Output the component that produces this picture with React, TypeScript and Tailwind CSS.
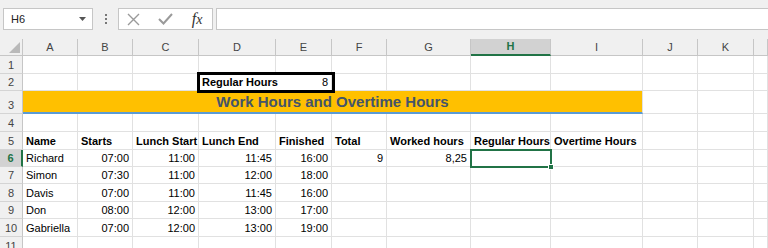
import React from "react";

const cols = ["A", "B", "C", "D", "E", "F", "G", "H", "I", "J", "K", ""];

type C = { t?: string; r?: boolean; b?: boolean };

const rows: { n: number; cells: C[] }[] = [
  { n: 5, cells: [
    { t: "Name", b: true }, { t: "Starts", b: true }, { t: "Lunch Start", b: true }, { t: "Lunch End", b: true },
    { t: "Finished", b: true }, { t: "Total", b: true }, { t: "Worked hours", b: true }, { t: "Regular Hours", b: true },
    { t: "Overtime Hours", b: true }, {}, {}, {},
  ] },
  { n: 6, cells: [
    { t: "Richard" }, { t: "07:00", r: true }, { t: "11:00", r: true }, { t: "11:45", r: true }, { t: "16:00", r: true },
    { t: "9", r: true }, { t: "8,25", r: true }, {}, {}, {}, {}, {},
  ] },
  { n: 7, cells: [
    { t: "Simon" }, { t: "07:30", r: true }, { t: "11:00", r: true }, { t: "12:00", r: true }, { t: "18:00", r: true },
    {}, {}, {}, {}, {}, {}, {},
  ] },
  { n: 8, cells: [
    { t: "Davis" }, { t: "07:00", r: true }, { t: "11:00", r: true }, { t: "11:45", r: true }, { t: "16:00", r: true },
    {}, {}, {}, {}, {}, {}, {},
  ] },
  { n: 9, cells: [
    { t: "Don" }, { t: "08:00", r: true }, { t: "12:00", r: true }, { t: "13:00", r: true }, { t: "17:00", r: true },
    {}, {}, {}, {}, {}, {}, {},
  ] },
  { n: 10, cells: [
    { t: "Gabriella" }, { t: "07:00", r: true }, { t: "12:00", r: true }, { t: "13:00", r: true }, { t: "19:00", r: true },
    {}, {}, {}, {}, {}, {}, {},
  ] },
  { n: 11, cells: [{}, {}, {}, {}, {}, {}, {}, {}, {}, {}, {}, {}] },
];

function Cell({ c }: { c: C }) {
  return (
    <div
      className={`border-r border-b border-[#e1e1e1] flex items-end pb-[1px] px-[3px] whitespace-nowrap overflow-visible text-[11px] leading-[13px] text-black ${
        c.r ? "justify-end" : "justify-start"
      } ${c.b ? "font-bold" : ""}`}
    >
      {c.t}
    </div>
  );
}

function RowHead({ n, active }: { n: number; active?: boolean }) {
  return (
    <div
      className={`flex items-end justify-center pb-[1px] text-[11px] leading-[13px] border-b border-[#d4d4d4] ${
        active
          ? "bg-[#d2d2d2] text-[#217346] font-bold border-r-2 border-r-[#217346]"
          : "bg-[#f0f0f0] text-[#444] border-r border-r-[#c6c6c6]"
      }`}
    >
      {n}
    </div>
  );
}

function Empty() {
  return <div className="border-r border-b border-[#e1e1e1]" />;
}

export default function App() {
  return (
    <div className="w-[768px] h-[248px] overflow-hidden bg-white font-['Liberation_Sans',Arial,sans-serif] select-none">
      {/* formula bar */}
      <div className="h-[39px] bg-[#f0f0f0] flex items-start pt-[8px] pl-[3px]">
        <div className="w-[90px] h-[22px] bg-white border border-[#c6c6c6] flex items-center justify-between pl-[7px] pr-[6px]">
          <span className="text-[11px] text-[#222]">H6</span>
          <svg width="7" height="4" viewBox="0 0 7 4">
            <path d="M0 0 H7 L3.5 4 Z" fill="#555" />
          </svg>
        </div>
        <div className="w-[25px] h-[22px] flex flex-col items-center justify-center gap-[2px]">
          <span className="w-[2px] h-[2px] bg-[#777]" />
          <span className="w-[2px] h-[2px] bg-[#777]" />
          <span className="w-[2px] h-[2px] bg-[#777]" />
        </div>
        <div className="w-[95px] h-[22px] bg-white border border-[#c6c6c6] flex items-center">
          <div className="w-[30px] flex justify-center">
            <svg width="13" height="13" viewBox="0 0 13 13">
              <path d="M1 1 L12 12 M12 1 L1 12" stroke="#9a9a9a" strokeWidth="1.4" />
            </svg>
          </div>
          <div className="w-[34px] flex justify-center">
            <svg width="15" height="12" viewBox="0 0 15 12">
              <path d="M1 6 L5.5 10.5 L14 1" stroke="#9a9a9a" strokeWidth="2" fill="none" />
            </svg>
          </div>
          <div className="w-[30px] flex justify-center">
            <span className="font-['Liberation_Serif',serif] italic text-[16px] leading-none text-[#333]">
              f<span className="text-[14px]">x</span>
            </span>
          </div>
        </div>
        <div className="ml-[3px] flex-1 h-[22px] bg-white border border-[#c6c6c6] border-r-0" />
      </div>

      {/* grid */}
      <div className="relative grid grid-cols-[23px_55px_55px_66px_77px_56px_55px_84px_80px_92px_55px_56px_1fr] grid-rows-[17px_18px_17px_23px_18px_18px_17px_17px_18px_17px_18px_18px]">
        {/* column header row */}
        <div className="bg-[#f0f0f0] border-r border-b border-[#c6c6c6] relative">
          <svg className="absolute right-[2px] bottom-[2px]" width="11" height="11" viewBox="0 0 11 11">
            <path d="M11 0 L11 11 L0 11 Z" fill="#b9b9b9" />
          </svg>
        </div>
        {cols.map((c, i) =>
          c === "H" ? (
            <div
              key={i}
              className="bg-[#d2d2d2] border-r border-[#c6c6c6] border-b-2 border-b-[#217346] flex items-center justify-center text-[11px] text-[#217346] font-bold"
            >
              {c}
            </div>
          ) : (
            <div
              key={i}
              className="bg-[#f0f0f0] border-r border-b border-[#c6c6c6] flex items-center justify-center text-[11px] text-[#444]"
            >
              {c}
            </div>
          )
        )}

        {/* row 1 */}
        <RowHead n={1} />
        {cols.map((_, i) => (
          <Empty key={i} />
        ))}

        {/* row 2 */}
        <RowHead n={2} />
        <Empty />
        <Empty />
        <Empty />
        <div className="col-span-2 relative border-r border-b border-[#e1e1e1] flex items-end justify-between pb-[1px] px-[3px] text-[11px] leading-[13px] text-black">
          <span className="font-bold">Regular Hours</span>
          <span>8</span>
          <div className="absolute -left-[2px] -top-[2px] -right-[4px] -bottom-[3px] border-[3px] border-black pointer-events-none" />
        </div>
        {Array.from({ length: 7 }).map((_, i) => (
          <Empty key={i} />
        ))}

        {/* row 3 */}
        <RowHead n={3} />
        <div className="col-span-9 bg-[#ffc000] border-r border-r-[#e1e1e1] border-b-2 border-b-[#5b9bd5] flex items-end justify-center pb-[1px] text-[15px] leading-[18px] font-bold text-[#44546a]">
          Work Hours and Overtime Hours
        </div>
        <Empty />
        <Empty />
        <Empty />

        {/* row 4 */}
        <RowHead n={4} />
        {cols.map((_, i) => (
          <Empty key={i} />
        ))}

        {rows.map((r) => (
          <React.Fragment key={r.n}>
            <RowHead n={r.n} active={r.n === 6} />
            {r.cells.map((c, i) => (
              <Cell key={i} c={c} />
            ))}
          </React.Fragment>
        ))}

        {/* selection H6 */}
        <div className="absolute left-[470px] top-[110px] w-[82px] h-[19px] border-2 border-[#217346] pointer-events-none">
          <div className="absolute -right-[4px] -bottom-[4px] w-[6px] h-[6px] bg-[#217346] border border-white" />
        </div>
      </div>
    </div>
  );
}
